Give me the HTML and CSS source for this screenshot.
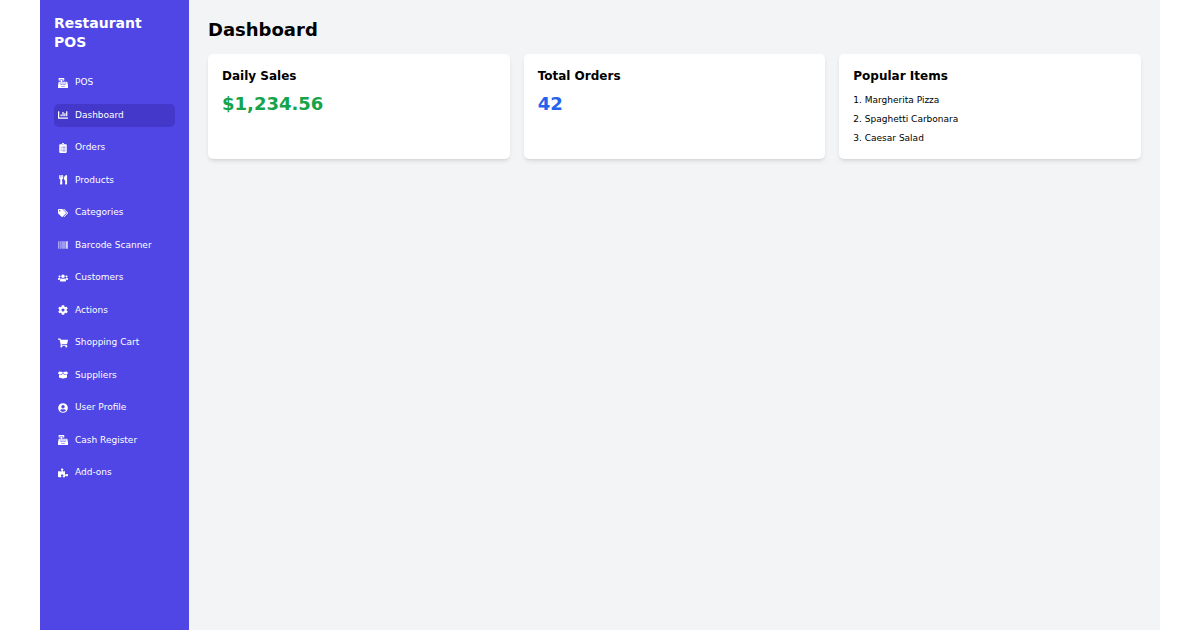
FILE: index.html
```html
<!DOCTYPE html>
<html lang="en">
  <head>
    <meta charset="UTF-8" />
    <meta name="viewport" content="width=device-width, initial-scale=1.0" />
    <title>Restaurant POS - Dashboard</title>
    <link rel="stylesheet" href="styles.css">
  </head>
  <body>
    <div class="app">
      <aside class="sidebar">
        <div class="brand">Restaurant POS</div>
        <nav class="menu">
          <a href="#" class="menu-link">
            <svg class="icon" viewBox="0 0 512 512" aria-hidden="true"><path fill-rule="evenodd" d="M511 379l-27-160c-3-16-16-27-32-27H208v-64h96c9 0 16-7 16-16V16c0-9-7-16-16-16H48c-9 0-16 7-16 16v96c0 9 7 16 16 16h96v64H59c-15 0-29 11-31 27L1 379c-1 3-1 7-1 10v91c0 18 14 32 32 32h448c18 0 32-14 32-32v-91c0-3 0-7-1-10zM280 248c0-9 7-16 16-16h16c9 0 16 7 16 16v16c0 9-7 16-16 16h-16c-9 0-16-7-16-16zm-32 64h16c9 0 16 7 16 16v16c0 9-7 16-16 16h-16c-9 0-16-7-16-16v-16c0-9 7-16 16-16zm-32-80c9 0 16 7 16 16v16c0 9-7 16-16 16h-16c-9 0-16-7-16-16v-16c0-9 7-16 16-16zM80 80V48h192v32zm40 200h-16c-9 0-16-7-16-16v-16c0-9 7-16 16-16h16c9 0 16 7 16 16v16c0 9-7 16-16 16zm16 64v-16c0-9 7-16 16-16h16c9 0 16 7 16 16v16c0 9-7 16-16 16h-16c-9 0-16-7-16-16zm216 112c0 4-4 8-8 8H168c-4 0-8-4-8-8v-16c0-4 4-8 8-8h176c4 0 8 4 8 8zm24-112c0 9-7 16-16 16h-16c-9 0-16-7-16-16v-16c0-9 7-16 16-16h16c9 0 16 7 16 16zm48-80c0 9-7 16-16 16h-16c-9 0-16-7-16-16v-16c0-9 7-16 16-16h16c9 0 16 7 16 16z" /></svg>
            POS
          </a>
          <a href="#" class="menu-link active" aria-current="page">
            <svg class="icon" viewBox="0 0 512 512" aria-hidden="true"><path d="M333 320h38c6 0 13-6 13-13V173c0-7-7-13-13-13h-38c-7 0-13 6-13 13v134c0 7 6 13 13 13zm96 0h38c6 0 13-6 13-13V77c0-7-7-13-13-13h-38c-7 0-13 6-13 13v230c0 7 6 13 13 13zm-288 0h38c6 0 13-6 13-13v-70c0-7-7-13-13-13h-38c-7 0-13 6-13 13v70c0 7 6 13 13 13zm96 0h38c6 0 13-6 13-13V109c0-7-7-13-13-13h-38c-7 0-13 6-13 13v198c0 7 6 13 13 13zm259 64H64V80c0-9-7-16-16-16H16C7 64 0 71 0 80v336c0 18 14 32 32 32h464c9 0 16-7 16-16v-32c0-9-7-16-16-16z" /></svg>
            Dashboard
          </a>
          <a href="#" class="menu-link">
            <svg class="icon" viewBox="0 0 384 512" aria-hidden="true"><path fill-rule="evenodd" d="M336 64h-80c0-35-29-64-64-64s-64 29-64 64H48C22 64 0 86 0 112v352c0 27 22 48 48 48h288c27 0 48-21 48-48V112c0-26-21-48-48-48zM96 424a24 24 0 1 1 0-48 24 24 0 0 1 0 48zm0-96a24 24 0 1 1 0-48 24 24 0 0 1 0 48zm0-96a24 24 0 1 1 0-48 24 24 0 0 1 0 48zm96-192a24 24 0 1 1 0 48 24 24 0 0 1 0-48zm128 368c0 4-4 8-8 8H168c-4 0-8-4-8-8v-16c0-4 4-8 8-8h144c4 0 8 4 8 8zm0-96c0 4-4 8-8 8H168c-4 0-8-4-8-8v-16c0-4 4-8 8-8h144c4 0 8 4 8 8zm0-96c0 4-4 8-8 8H168c-4 0-8-4-8-8v-16c0-4 4-8 8-8h144c4 0 8 4 8 8z" /></svg>
            Orders
          </a>
          <a href="#" class="menu-link">
            <svg class="icon" viewBox="0 0 416 512" aria-hidden="true"><path d="M208 15c1 5 16 88 16 119 0 48-26 82-64 96l12 223c1 14-10 27-24 27H84c-13 0-25-12-24-27l12-223C34 216 8 182 8 134 8 103 23 20 24 15c3-20 46-20 48 1v131c1 3 15 3 16 0C89 123 96 20 96 15c3-20 45-20 48 1 0 4 7 107 8 131 1 3 15 3 16 0V15c3-20 45-20 48 0zm119 286l-15 152c-1 14 10 27 24 27h56c13 0 24-11 24-24V24c0-13-11-24-24-24-83 0-222 179-65 301z" /></svg>
            Products
          </a>
          <a href="#" class="menu-link">
            <svg class="icon" viewBox="0 0 640 512" aria-hidden="true"><path d="M498 226L286 14C277 5 265 0 252 0H48C21 0 0 21 0 48v204c0 13 5 25 14 34l212 212c19 19 49 19 68 0l204-204c19-19 19-49 0-68zM112 160a48 48 0 1 1 0-96 48 48 0 0 1 0 96zm514 134L422 498c-19 19-49 19-68 0l-1-1 175-174c15-15 24-35 24-57s-9-43-24-58L320 0h60c13 0 25 5 34 14l212 212c19 19 19 49 0 68z" /></svg>
            Categories
          </a>
          <a href="#" class="menu-link">
            <svg class="icon" viewBox="0 0 512 512" aria-hidden="true"><path d="M0 448V64h18v384zm27 0V64h9v384zm27 0V64h9v384zm44 0V64h9v384zm36 0V64h17v384zm44 0V64h18v384zm36 0V64h18v384zm36 0V64h18v384zm45 0V64h18v384zm36 0V64h18v384zm27 0V64h18v384zm54 0V64h27v384zm36 0V64h18v384zm27 0V64h9v384zm18 0V64h19v384z" /></svg>
            Barcode Scanner
          </a>
          <a href="#" class="menu-link">
            <svg class="icon" viewBox="0 0 640 512" aria-hidden="true"><path d="M96 224c35 0 64-29 64-64s-29-64-64-64-64 29-64 64 29 64 64 64zm448 0c35 0 64-29 64-64s-29-64-64-64-64 29-64 64 29 64 64 64zm32 32h-64c-18 0-34 7-45 18 40 22 69 62 75 110h66c18 0 32-14 32-32v-32c0-35-29-64-64-64zm-256 0c62 0 112-50 112-112S382 32 320 32 208 82 208 144s50 112 112 112zm77 32h-8c-21 10-44 16-69 16s-48-6-69-16h-8c-64 0-115 52-115 115v29c0 27 21 48 48 48h288c27 0 48-21 48-48v-29c0-63-51-115-115-115zm-224-14c-11-11-27-18-45-18H64c-35 0-64 29-64 64v32c0 18 14 32 32 32h66c6-48 35-88 75-110z" /></svg>
            Customers
          </a>
          <a href="#" class="menu-link">
            <svg class="icon" viewBox="0 0 512 512" aria-hidden="true"><path fill-rule="evenodd" d="M487 316l-42-25c4-23 4-47 0-70l42-25c5-3 8-9 6-14-11-36-30-68-55-95-4-4-10-5-15-2l-42 24c-18-15-39-27-61-35V25c0-6-4-11-9-12-37-8-75-8-110 0-5 1-9 6-9 12v49c-22 8-43 20-61 35L89 85c-5-3-11-2-15 2-25 27-44 59-55 95-2 5 1 11 6 14l42 25c-4 23-4 47 0 70l-42 25c-5 3-8 9-6 14 11 36 30 68 55 95 4 4 10 5 15 2l42-24c18 15 39 27 61 35v49c0 6 4 11 9 12 37 8 75 8 110 0 5-1 9-6 9-12v-49c22-8 43-20 61-35l42 24c5 3 11 2 15-2 25-27 44-59 55-95 2-5-1-11-6-14zM256 336a80 80 0 1 1 0-160 80 80 0 0 1 0 160z" /></svg>
            Actions
          </a>
          <a href="#" class="menu-link">
            <svg class="icon" viewBox="0 0 576 512" aria-hidden="true"><path d="M528 301l47-208c4-15-8-29-23-29H159l-9-45c-2-11-12-19-23-19H24C11 0 0 11 0 24v16c0 13 11 24 24 24h70l70 343c-17 10-28 28-28 49a56 56 0 1 0 95-40h210a56 56 0 1 0 64-10l5-26c4-15-8-29-23-29H218l-7-32h294c11 0 21-8 23-18z" /></svg>
            Shopping Cart
          </a>
          <a href="#" class="menu-link">
            <svg class="icon" viewBox="0 0 640 512" aria-hidden="true"><path d="M426 256c-15 0-29-8-36-21l-70-115-70 115c-7 13-21 21-36 21-4 0-8-1-12-2L64 215v178c0 15 10 28 24 31l217 54c10 3 21 3 31 0l216-54c14-4 24-17 24-31V215l-138 39c-4 1-8 2-12 2zm213-108L587 45c-3-6-10-10-17-9L320 68l92 152c4 6 11 9 18 7l198-56c10-3 15-14 11-23zM53 45L2 148c-5 9 0 20 10 23l198 56c7 2 14-1 18-7l92-152L70 36c-7-1-14 3-17 9z" /></svg>
            Suppliers
          </a>
          <a href="#" class="menu-link">
            <svg class="icon" viewBox="0 0 496 512" aria-hidden="true"><path fill-rule="evenodd" d="M248 8a248 248 0 1 0 0 496 248 248 0 0 0 0-496zm0 96a88 88 0 1 1 0 176 88 88 0 0 1 0-176zm0 344c-59 0-111-27-146-69 19-35 56-59 98-59 3 0 5 0 7 1 26 9 56 9 82 0 2-1 4-1 7-1 42 0 79 24 98 59-35 42-87 69-146 69z" /></svg>
            User Profile
          </a>
          <a href="#" class="menu-link">
            <svg class="icon" viewBox="0 0 512 512" aria-hidden="true"><path fill-rule="evenodd" d="M511 379l-27-160c-3-16-16-27-32-27H208v-64h96c9 0 16-7 16-16V16c0-9-7-16-16-16H48c-9 0-16 7-16 16v96c0 9 7 16 16 16h96v64H59c-15 0-29 11-31 27L1 379c-1 3-1 7-1 10v91c0 18 14 32 32 32h448c18 0 32-14 32-32v-91c0-3 0-7-1-10zM280 248c0-9 7-16 16-16h16c9 0 16 7 16 16v16c0 9-7 16-16 16h-16c-9 0-16-7-16-16zm-32 64h16c9 0 16 7 16 16v16c0 9-7 16-16 16h-16c-9 0-16-7-16-16v-16c0-9 7-16 16-16zm-32-80c9 0 16 7 16 16v16c0 9-7 16-16 16h-16c-9 0-16-7-16-16v-16c0-9 7-16 16-16zM80 80V48h192v32zm40 200h-16c-9 0-16-7-16-16v-16c0-9 7-16 16-16h16c9 0 16 7 16 16v16c0 9-7 16-16 16zm16 64v-16c0-9 7-16 16-16h16c9 0 16 7 16 16v16c0 9-7 16-16 16h-16c-9 0-16-7-16-16zm216 112c0 4-4 8-8 8H168c-4 0-8-4-8-8v-16c0-4 4-8 8-8h176c4 0 8 4 8 8zm24-112c0 9-7 16-16 16h-16c-9 0-16-7-16-16v-16c0-9 7-16 16-16h16c9 0 16 7 16 16zm48-80c0 9-7 16-16 16h-16c-9 0-16-7-16-16v-16c0-9 7-16 16-16h16c9 0 16 7 16 16z" /></svg>
            Cash Register
          </a>
          <a href="#" class="menu-link">
            <svg class="icon" viewBox="0 0 576 512" aria-hidden="true"><path d="M519 313c-41 0-40 36-76 36-30 0-39-25-39-71V156c-84 12-140 12-140-20 0-34 42-40 42-85 0-31-27-51-66-51-37 0-69 18-69 53 0 39 35 49 35 82 0 50-82 23-206 22v329c120 2 205 37 205-11 0-33-33-47-33-82s36-53 71-53c40 0 66 20 66 51 0 46-38 56-38 78 0 49 128 27 137 25 2-25-12-78 36-78 24 0 34 41 82 41 32 0 50-30 50-70 0-44-23-74-57-74z" /></svg>
            Add-ons
          </a>
        </nav>
      </aside>

      <main class="content">
        <h1 class="page-title">Dashboard</h1>
        <div class="cards">
          <section class="card">
            <h2 class="card-title">Daily Sales</h2>
            <p class="card-value sales">$1,234.56</p>
          </section>
          <section class="card">
            <h2 class="card-title">Total Orders</h2>
            <p class="card-value orders">42</p>
          </section>
          <section class="card">
            <h2 class="card-title">Popular Items</h2>
            <ol class="popular-list">
              <li>Margherita Pizza</li>
              <li>Spaghetti Carbonara</li>
              <li>Caesar Salad</li>
            </ol>
          </section>
        </div>
      </main>
    </div>
  </body>
</html>
```
FILE: styles.css
```css
* {
  box-sizing: border-box;
}

body {
  margin: 0;
  font-family: "DejaVu Sans", Verdana, sans-serif;
  font-size: 9px;
  line-height: 14px;
  color: #000;
  background-color: #fff;
}

.app {
  display: flex;
  min-height: 100vh;
  margin: 0 40px;
  background-color: #f3f4f6;
}

.sidebar {
  flex: 0 0 149px;
  padding: 14px;
  background-color: #4f46e5;
  color: #fff;
}

.brand {
  margin-bottom: 19px;
  font-size: 14px;
  font-weight: 700;
  line-height: 19px;
}

.menu {
  display: flex;
  flex-direction: column;
  gap: 9px;
}

.menu-link {
  display: flex;
  align-items: center;
  gap: 7px;
  padding: 5px 4px;
  border-radius: 5px;
  color: #fff;
  line-height: 1.5;
  text-decoration: none;
}

.menu-link:hover,
.menu-link.active {
  background-color: #4338ca;
}

.icon {
  flex: none;
  width: 10px;
  height: 10px;
  fill: currentColor;
}

.content {
  flex: 1;
  padding: 19px;
}

.page-title {
  margin: 0 0 14px;
  font-size: 18px;
  line-height: 21px;
}

.cards {
  display: grid;
  grid-template-columns: repeat(3, 1fr);
  gap: 14px;
}

.card {
  padding: 14px;
  border-radius: 5px;
  background-color: #fff;
  box-shadow: 0 3px 5px -1px rgba(0, 0, 0, 0.1), 0 2px 3px -2px rgba(0, 0, 0, 0.1);
}

.card-title {
  margin: 0 0 9px;
  font-size: 12px;
  line-height: 16px;
}

.card-value {
  margin: 0;
  font-size: 18px;
  font-weight: 700;
  line-height: 21px;
}

.sales {
  color: #16a34a;
}

.orders {
  color: #2563eb;
}

.popular-list {
  display: flex;
  flex-direction: column;
  gap: 5px;
  margin: 0;
  padding: 0;
  list-style-position: inside;
}
```
